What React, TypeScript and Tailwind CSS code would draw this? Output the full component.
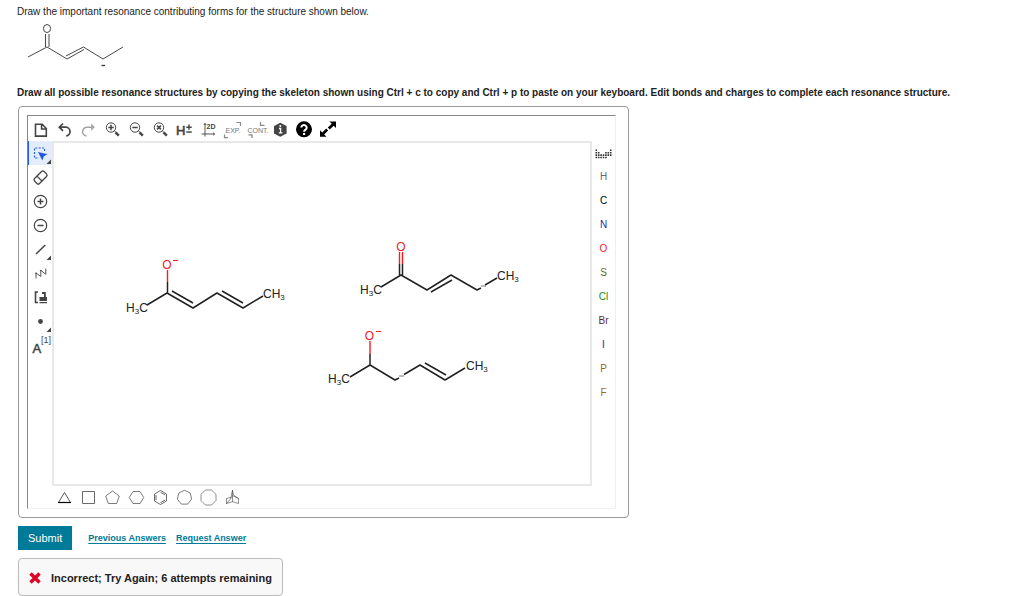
import React from 'react';

type Tool = { label: string; icon: React.ReactNode; active?: boolean };

const INK = '#444444';

const corner = <path d="M23 18.5v4.5h-4.5z" fill={INK} stroke="none" />;

const lens = (
    <>
        <circle cx="11" cy="10.5" r="4.7" strokeWidth="1" />
        <path d="M14.5 14l1.2 1.2" strokeWidth="1" />
        <path d="M15.5 15.3l3.3 3.4" strokeWidth="2.4" />
    </>
);

const TOP_TOOLS: Tool[] = [
    { label: 'New document', icon: <path d="M7.5 7.3h6.7l4.1 4.2v7.6H7.5zM13.6 7.5v4.5h4.5" strokeWidth="1.6" /> },
    {
        label: 'Undo',
        icon: (
            <>
                <path d="M7.5 10.2H13a4.4 4.4 0 0 1 1.2 8.8" strokeWidth="1.7" />
                <path d="M11 6.5l-3.7 3.7 3.7 3.7" strokeWidth="1.7" />
            </>
        ),
    },
    {
        label: 'Redo',
        icon: (
            <>
                <path d="M17.3 10.2h-5.7a4.4 4.4 0 0 0-1.2 8.8" stroke="#a3a3a3" strokeWidth="1.5" />
                <path d="M18.8 10.2l-3.6-3.6v7.2z" fill="#a3a3a3" stroke="none" />
            </>
        ),
    },
    { label: 'Zoom in', icon: <>{lens}<path d="M8.3 10.5h5.4M11 7.8v5.4" strokeWidth="1.5" /></> },
    { label: 'Zoom out', icon: <>{lens}<path d="M8.3 10.5h5.4" strokeWidth="1.5" /></> },
    { label: 'Zoom to fit', icon: <>{lens}<path d="M9.1 8.6l3.8 3.8M12.9 8.6l-3.8 3.8" strokeWidth="1.5" /></> },
    {
        label: 'Toggle hydrogens',
        icon: (
            <>
                <text x="4" y="18" fontSize="13" fill={INK} stroke={INK} strokeWidth=".6">H</text>
                <path d="M14.3 10.2h5.4M17 7.5v5.2M14.3 15h5.4" strokeWidth="1.5" />
            </>
        ),
    },
    {
        label: 'Clean 2D',
        icon: (
            <>
                <path d="M9 6.5v13M5.5 17h13M7.8 8L9 6.3 10.2 8M17 15.7l1.7 1.3-1.7 1.3" strokeWidth=".9" />
                <text x="10.5" y="12" fontSize="7" fontWeight="bold" fill={INK} stroke="none">2D</text>
            </>
        ),
    },
    {
        label: 'Expand groups',
        icon: (
            <>
                <text x="5.5" y="15.5" fontSize="7" fill="#777777" stroke="none" className="font-['Liberation_Sans_Narrow','Liberation_Sans',sans-serif]">EXP.</text>
                <path d="M16.5 5.5h4V9M4.5 17.5v3.2H8" stroke="#888888" strokeWidth="1.2" />
            </>
        ),
    },
    {
        label: 'Contract groups',
        icon: (
            <>
                <text x="3.5" y="15.5" fontSize="7" fill="#777777" stroke="none" className="font-['Liberation_Sans_Narrow','Liberation_Sans',sans-serif]">CONT.</text>
                <path d="M16.5 5v3.4h4M4.5 17.8H8V21" stroke="#888888" strokeWidth="1.2" />
            </>
        ),
    },
    {
        label: 'Structure info',
        icon: (
            <>
                <path d="M12.3 5.8l6.3 3.3v7.4l-6.3 3.3L6 16.5V9.1z" fill={INK} stroke="none" />
                <path d="M11 11.5h1.6v4M10.8 15.8h3.6" stroke="#fff" strokeWidth="1.3" />
                <circle cx="12.3" cy="8.9" r="1" fill="#fff" stroke="none" />
            </>
        ),
    },
    {
        label: 'Help',
        icon: (
            <>
                <circle cx="12" cy="12.3" r="8" fill="#000" stroke="none" />
                <path d="M9.3 10.6a2.7 2.5 0 1 1 4.3 2c-1.1.7-1.5 1-1.5 2.1" stroke="#fff" strokeWidth="2" />
                <circle cx="12.1" cy="16.9" r="1.2" fill="#fff" stroke="none" />
            </>
        ),
    },
    {
        label: 'Full screen',
        icon: (
            <>
                <path d="M13.5 4.5H20V11zM10.5 19.7H4v-6.5z" fill="#000" stroke="none" />
                <path d="M17.5 7l-4.7 4.6M6.5 17.2l4.7-4.6" stroke="#000" strokeWidth="2.8" />
            </>
        ),
    },
];

const SIDE_TOOLS: Tool[] = [
    {
        label: 'Select',
        active: true,
        icon: (
            <>
                <path d="M16.5 10V7h-10v10H11" stroke="#2563d9" strokeWidth="1.2" strokeDasharray="2 1.4" />
                <path d="M10 11l9.5 2.3-3.6 2-1.6 4.2z" fill="#1d5ae0" stroke="none" />
                {corner}
            </>
        ),
    },
    {
        label: 'Erase',
        icon: (
            <g transform="rotate(-45 12.5 12.5)">
                <rect x="5.8" y="9" width="13.5" height="7" rx="1.8" strokeWidth="1.3" />
                <path d="M11 9v7" strokeWidth="1.2" />
            </g>
        ),
    },
    { label: 'Increase charge', icon: <><circle cx="12.5" cy="12.5" r="6.2" strokeWidth="1.2" /><path d="M9.5 12.5h6M12.5 9.5v6" strokeWidth="1.5" /></> },
    { label: 'Decrease charge', icon: <><circle cx="12.5" cy="12.5" r="6.2" strokeWidth="1.2" /><path d="M9.5 12.5h6" strokeWidth="1.5" /></> },
    { label: 'Single bond', icon: <><path d="M8 17l9.3-9" strokeWidth="1.5" />{corner}</> },
    { label: 'Chain', icon: <path d="M8 17.5V12l4.8 3.5V9.3l5 4V7.5M7 12.2h2M11.800 9.500h2" strokeWidth="1" stroke="#555555" /> },
    {
        label: 'Repeating unit',
        icon: (
            <>
                <path d="M10 7H7.5v10.5H10" strokeWidth="1.6" />
                <path d="M14 7h3.8v5H19v4h-7.500v-4H16V9h-2zM11.500 17H19v1.200h-7.500z" fill={INK} stroke="none" />
            </>
        ),
    },
    { label: 'Radical', icon: <><circle cx="12.5" cy="12.5" r="2.4" fill={INK} stroke="none" />{corner}</> },
    {
        label: 'Atom map',
        icon: (
            <>
                <text x="4.5" y="20" fontSize="13" fill={INK} stroke={INK} strokeWidth=".5">A</text>
                <text x="13" y="10" fontSize="9" fill={INK} stroke="none">[1]</text>
            </>
        ),
    },
];

const RINGS: Tool[] = [
    { label: 'Cyclopropane', icon: <><path d="M6.5 17.5l6-10 6 10" strokeWidth=".9" /><path d="M6 17.5h13" stroke="#000" strokeWidth="1.2" /></> },
    { label: 'Cyclobutane', icon: <path d="M6.5 6.5h12v12h-12z" strokeWidth=".8" /> },
    { label: 'Cyclopentane', icon: <path d="M12.5 6l6.8 5-2.6 7.5H8.3L5.7 11z" strokeWidth=".7" /> },
    { label: 'Cyclohexane', icon: <path d="M5.3 12.5l3.7-6h7l3.7 6-3.7 6H9z" strokeWidth=".7" /> },
    { label: 'Benzene', icon: <path d="M12.5 5.5l6 3.5v7l-6 3.5-6-3.5V9zM8 10v5M12.5 7.3l4.6 2.6M12.5 17.7l4.6-2.6" strokeWidth=".8" /> },
    { label: 'Cycloheptane', icon: <path d="M12.5 5.3l5.7 2.7 1.4 6.1-3.9 5H9.3l-3.9-5L6.8 8z" strokeWidth=".7" /> },
    { label: 'Cyclooctane', icon: <path d="M9.4 5h6.2L20 9.4v6.2L15.6 20H9.4L5 15.6V9.4z" strokeWidth=".6" /> },
    { label: 'Norbornane', icon: <path d="M12.5 5v7l-6 1.500v5l6-1.800 6 1.800v-5l-6-3M12.500 5l-2 9-4.500 5M12.500 5l1 5 5 3.500M12.500 12v5" strokeWidth=".6" /> },
];

const ELEMENTS = [
    { symbol: 'H', color: 'text-[#666666]' },
    { symbol: 'C', color: 'text-black' },
    { symbol: 'N', color: 'text-[#2a2a9c]' },
    { symbol: 'O', color: 'text-[#f01818]' },
    { symbol: 'S', color: 'text-[#68680c]' },
    { symbol: 'Cl', color: 'text-[#0a8f20]' },
    { symbol: 'Br', color: 'text-[#642828]' },
    { symbol: 'I', color: 'text-[#54128c]' },
    { symbol: 'P', color: 'text-[#9c6414]' },
    { symbol: 'F', color: 'text-[#a06c20]' },
];

const ToolButton: React.FC<{ tool: Tool }> = ({ tool }) => (
    <button
        type="button"
        aria-label={tool.label}
        className={tool.active ? 'block size-6 border-l border-[#1d5ae0] bg-[#e3ecfc]' : 'block size-6'}
    >
        <svg viewBox="0 0 24 24" className={tool.active ? '-ml-px size-6' : 'size-6'} fill="none" stroke={INK}>
            {tool.icon}
        </svg>
    </button>
);

const Methyl: React.FC<{ x: number; y: number; flipped?: boolean }> = ({ x, y, flipped }) => (
    <text x={x} y={y} fontSize="12" fill="#222222">
        {flipped ? 'H' : 'CH'}
        <tspan fontSize="8" dy="2">3</tspan>
        {flipped && <tspan dy="-2">C</tspan>}
    </text>
);

const Question: React.FC = () => (
    <svg viewBox="0 0 112 60" className="ml-[3px] h-[60px] w-28" fill="none" stroke="#333333" strokeWidth=".9" role="img" aria-label="Skeleton structure">
        <ellipse cx="27" cy="8.5" rx="3.6" ry="4" />
        <path d="M25.5 14v13M29 14v13M8 37l19-10 20 12 17-9.5M46 36l17.5-9L83 39l20-12" />
        <path d="M81.5 45.5H85" strokeWidth="1.3" />
    </svg>
);

const Canvas: React.FC = () => (
    <svg viewBox="0 0 536 341" className="block w-full" fill="none" role="img" aria-label="Drawn resonance structures">
        <g stroke="#222222" strokeWidth="1.5" strokeLinejoin="round">
            <path d="M93 162l20-12 26 15 24-15 26 15 20-12M118 148l21 12M168 148l21 12M113.5 139v11" />
            <path d="M327 144l20-12 26 15 24-15 26 15 4-2M431 142l12-7M377 149l21-12M345.5 121v11M348.5 121v11" />
            <path d="M296 234l20-12 25 15 4-2M350 231.5l16-9.5 25 15 20-12M371 220l21 12M316 211v11" />
            <path d="M427 143h5M345 233h5" stroke="#777777" strokeWidth="1" />
        </g>
        <g stroke="#f02020" strokeWidth="1.4">
            <path d="M113.5 127v12M345.5 109v12M348.5 109v12M316 198v13" />
            <path d="M119 117.500h5M322 188.500h5" strokeWidth="1" />
        </g>
        <g fontSize="12" fill="#f02020" textAnchor="middle">
            <text x="113" y="126">O</text>
            <text x="347" y="108">O</text>
            <text x="315.5" y="197">O</text>
        </g>
        <Methyl x={72} y={169} flipped />
        <Methyl x={209} y={155} />
        <Methyl x={306} y={151} flipped />
        <Methyl x={443} y={137} />
        <Methyl x={274} y={240} flipped />
        <Methyl x={412} y={227} />
    </svg>
);

const Sketcher: React.FC = () => (
    <section className="w-full max-w-[611px] rounded border border-[#999999] py-2 pr-3 pl-2" aria-label="Structure editor">
        <div className="border border-t-[#888888] border-r-[#eeeeee] border-b-[#eeeeee] border-l-[#888888]">
            <div className="flex h-[25px] items-end">
                {TOP_TOOLS.map(tool => <ToolButton key={tool.label} tool={tool} />)}
            </div>
            <div className="flex">
                <div className="flex w-6 flex-col">
                    {SIDE_TOOLS.map(tool => <ToolButton key={tool.label} tool={tool} />)}
                </div>
                <div className="min-w-0 flex-1 border-2 border-[#e8e8e8]">
                    <Canvas />
                </div>
                <div className="flex w-[23px] flex-col">
                    <button type="button" aria-label="Periodic table" className="h-6">
                        <svg viewBox="0 0 23 24" className="h-6 w-full" fill="none" stroke="#333333" strokeWidth="1.6" strokeDasharray="1.6 .8">
                            <path d="M4.3 8.5v8.8M6.7 10.9v6.4M9.1 13.3v4M11.5 13.3v4M13.9 10.9v6.4M16.3 10.9v4M18.7 8.5v6.4" />
                        </svg>
                    </button>
                    {ELEMENTS.map(el => (
                        <button key={el.symbol} type="button" className={`h-6 text-center text-[10px] ${el.color}`}>
                            {el.symbol}
                        </button>
                    ))}
                </div>
            </div>
            <div className="flex h-[22px] items-center pl-6">
                {RINGS.map(tool => <ToolButton key={tool.label} tool={tool} />)}
            </div>
        </div>
    </section>
);

export default function App() {
    return (
        <main className="bg-white px-[17px] pt-1 font-['Liberation_Sans',Arial,sans-serif] text-[10px] leading-4 text-[#222222]">
            <p>Draw the important resonance contributing forms for the structure shown below.</p>
            <Question />
            <p className="mt-[5px] font-bold">
                Draw all possible resonance structures by copying the skeleton shown using Ctrl + c to copy and Ctrl + p to paste on your keyboard. Edit bonds and charges to complete each resonance structure.
            </p>
            <div className="mx-px mt-[5px]">
                <Sketcher />
                <div className="mt-2 flex items-center">
                    <button type="button" className="h-6 bg-[#007a99] px-2.5 text-[11px] text-white">Submit</button>
                    <a href="#previous" className="ml-4 text-[9px] font-bold text-[#007a99] underline underline-offset-2">Previous Answers</a>
                    <a href="#request" className="ml-2.5 text-[9px] font-bold text-[#007a99] underline underline-offset-2">Request Answer</a>
                </div>
                <div className="mt-2 flex h-[38px] w-fit items-center gap-2.5 rounded border border-[#bbbbbb] bg-[#f8f8f8] px-2.5 pt-0.5 text-[11px] font-bold" role="status">
                    <svg viewBox="0 0 12 12" className="size-3" stroke="#e00024" strokeWidth="3.4" aria-hidden="true">
                        <path d="M1.5 1.5l9 9M10.5 1.5l-9 9" />
                    </svg>
                    Incorrect; Try Again; 6 attempts remaining
                </div>
            </div>
        </main>
    );
}
